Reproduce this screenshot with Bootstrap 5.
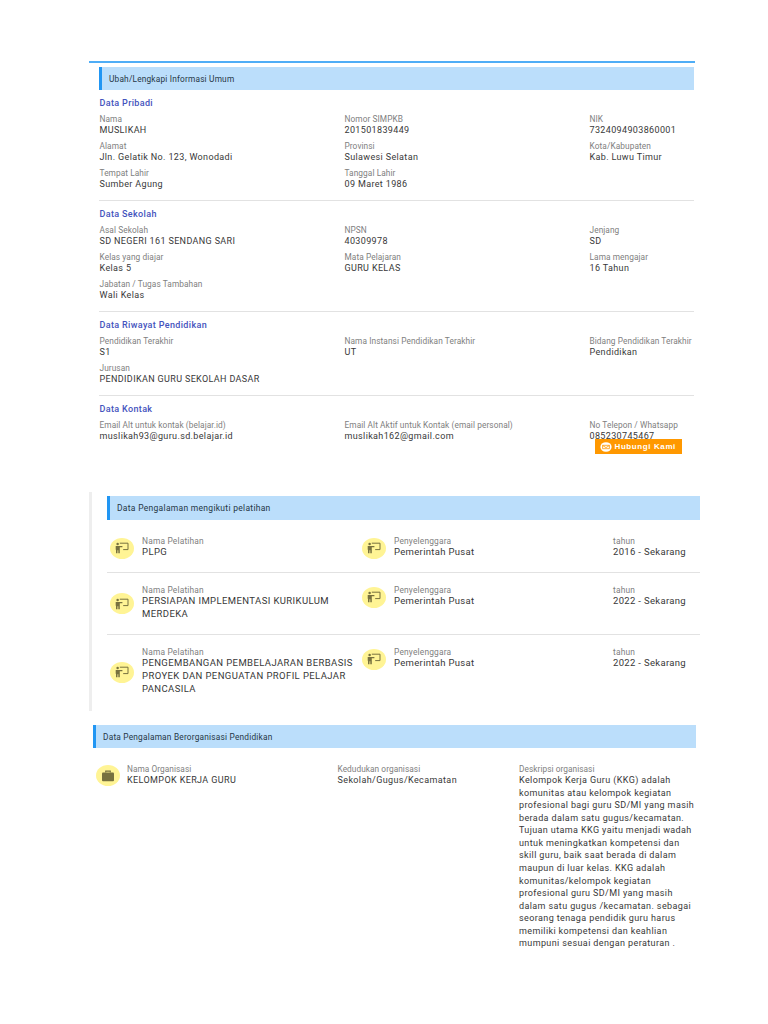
<!DOCTYPE html>
<html lang="id">
<head>
<meta charset="utf-8">
<meta name="viewport" content="width=device-width, initial-scale=1">
<title>Biodata Guru</title>
<link href="https://cdn.jsdelivr.net/npm/bootstrap@5.3.0/dist/css/bootstrap.min.css" rel="stylesheet">
<style>
  body { font-family: Roboto, "Liberation Sans", sans-serif; background: #fff; color: #333; white-space: nowrap; overflow-x: hidden; }
  .page { height: 1024px; padding-top: 61px; }
  .profile { width: 606px; margin-left: 89px; height: 431px; border-top: 2px solid #4fadf6; padding: 4px 1px 0 10px; }
  .bar { background: #bbdefb; border-left: 3px solid #2196f3; color: #263746; font-size: 8.3px; letter-spacing: .19px; }
  .profile .bar { height: 23px; padding: 1px 0 0 7px; }
  .group { padding: 7px 0 5px .5px; border-bottom: 1px solid #e2e2e2; }
  .group:last-child { border-bottom: 0; }
  .group h2 { font-size: 9px; font-weight: 500; line-height: 12px; letter-spacing: .35px; color: #4453bd; margin: 0 0 5px; }
  .fields { display: grid; grid-template-columns: 245px 245px 105px; grid-auto-rows: 27px; }
  .lbl { font-size: 8.3px; line-height: 11px; letter-spacing: .08px; color: #808080; }
  .val { font-size: 9px; line-height: 12px; letter-spacing: .36px; color: #383838; }
  .profile .val { margin-top: -1px; }
  .contact-btn { left: 5px; top: 19px; width: 87px; height: 15px; background: #ff9800; color: #fff; border-radius: 0; font: bold 8px/15px "Liberation Sans", sans-serif; letter-spacing: .6px; padding: 0 0 0 5px; gap: 3px; border: 0; z-index: 1; }
  .training { width: 611px; margin-left: 89px; height: 219px; border-left: 3px solid #eee; padding: 4px 0 0 15px; }
  .training .bar { height: 24px; padding-left: 7px; font-size: 8.5px; letter-spacing: .29px; }
  .course { display: grid; grid-template-columns: 252px 254px 87px; padding: 12px 0 14px; border-bottom: 1px solid #e2e2e2; }
  .course:last-child { border: 0; }
  .training .lbl { font-size: 8.4px; line-height: 10px; letter-spacing: .18px; }
  .training .val { font-size: 9.5px; line-height: 13px; letter-spacing: .4px; margin-top: -1px; }
  .training .val.mixed { letter-spacing: .32px; }
  .item { display: grid; grid-template-columns: 24px 1fr; grid-template-rows: 10px auto; column-gap: 8px; padding-left: 3px; align-content: start; }
  .item .disc { grid-row: 1 / 3; align-self: center; margin: 1px 0 -1px; }
  .item .lbl, .item .val { grid-column: 2; }
  .disc { width: 24px; height: 21px; border-radius: 50%; background: #fff495; color: #77713f; flex: none; }
  .org { width: 603px; margin: 14px 0 0 93px; }
  .org .bar { height: 23px; padding: 1px 0 0 7px; letter-spacing: .21px; }
  .org-row { display: grid; grid-template-columns: 34px 210.5px 181.5px 177px; padding-top: 16px; }
  .org .lbl { line-height: 10px; letter-spacing: .05px; }
  .org .val { line-height: 12.57px; letter-spacing: .39px; }
  .org .disc { margin: 1px 0 0 3px; }
</style>
</head>
<body>
<svg class="d-none">
  <symbol id="teach" viewBox="0 0 14 12">
    <path d="M4.8 1.2H13V7.6H8.2" fill="none" stroke="currentColor" stroke-width="1"/>
    <circle cx="2.6" cy="2" r="1.25" fill="currentColor"/>
    <path d="M.7 4H7.4V5.3H4.8V11.3H3.3V8.2H2.5V11.3H1V7.7H.7Z" fill="currentColor"/>
  </symbol>
  <symbol id="case" viewBox="0 0 14 12">
    <path d="M4.7 2.6V1.1H9.3V2.6" fill="none" stroke="currentColor" stroke-width="1.1"/>
    <rect x="1" y="2.5" width="12" height="8.7" rx="1" fill="currentColor"/>
  </symbol>
</svg>
<main class="page">
  <section class="profile">
    <div class="bar d-flex align-items-center">Ubah/Lengkapi Informasi Umum</div>
    <div class="group">
      <h2>Data Pribadi</h2>
      <div class="fields">
        <div><div class="lbl">Nama</div><div class="val">MUSLIKAH</div></div>
        <div><div class="lbl">Nomor SIMPKB</div><div class="val">201501839449</div></div>
        <div><div class="lbl">NIK</div><div class="val">7324094903860001</div></div>
        <div><div class="lbl">Alamat</div><div class="val">Jln. Gelatik No. 123, Wonodadi</div></div>
        <div><div class="lbl">Provinsi</div><div class="val">Sulawesi Selatan</div></div>
        <div><div class="lbl">Kota/Kabupaten</div><div class="val">Kab. Luwu Timur</div></div>
        <div><div class="lbl">Tempat Lahir</div><div class="val">Sumber Agung</div></div>
        <div><div class="lbl">Tanggal Lahir</div><div class="val">09 Maret 1986</div></div>
      </div>
    </div>
    <div class="group">
      <h2>Data Sekolah</h2>
      <div class="fields">
        <div><div class="lbl">Asal Sekolah</div><div class="val">SD NEGERI 161 SENDANG SARI</div></div>
        <div><div class="lbl">NPSN</div><div class="val">40309978</div></div>
        <div><div class="lbl">Jenjang</div><div class="val">SD</div></div>
        <div><div class="lbl">Kelas yang diajar</div><div class="val">Kelas 5</div></div>
        <div><div class="lbl">Mata Pelajaran</div><div class="val">GURU KELAS</div></div>
        <div><div class="lbl">Lama mengajar</div><div class="val">16 Tahun</div></div>
        <div><div class="lbl">Jabatan / Tugas Tambahan</div><div class="val">Wali Kelas</div></div>
      </div>
    </div>
    <div class="group">
      <h2>Data Riwayat Pendidikan</h2>
      <div class="fields">
        <div><div class="lbl">Pendidikan Terakhir</div><div class="val">S1</div></div>
        <div><div class="lbl">Nama Instansi Pendidikan Terakhir</div><div class="val">UT</div></div>
        <div><div class="lbl">Bidang Pendidikan Terakhir</div><div class="val">Pendidikan</div></div>
        <div><div class="lbl">Jurusan</div><div class="val">PENDIDIKAN GURU SEKOLAH DASAR</div></div>
      </div>
    </div>
    <div class="group">
      <h2>Data Kontak</h2>
      <div class="fields">
        <div><div class="lbl">Email Alt untuk kontak (belajar.id)</div><div class="val">muslikah93@guru.sd.belajar.id</div></div>
        <div><div class="lbl">Email Alt Aktif untuk Kontak (email personal)</div><div class="val">muslikah162@gmail.com</div></div>
        <div class="position-relative"><div class="lbl">No Telepon / Whatsapp</div><div class="val">085230745467</div>
          <button type="button" class="btn contact-btn position-absolute d-flex align-items-center">
            <svg width="12" height="10" viewBox="0 0 12 10"><ellipse cx="6" cy="5" rx="5.6" ry="4.8" fill="#fff"/><path d="M2.6 3.3H9.4V6.7H2.6ZM2.6 3.5L6 5.6L9.4 3.5" fill="none" stroke="#ff9800" stroke-width=".8"/></svg>
            <span>Hubungi Kami</span>
          </button>
        </div>
      </div>
    </div>
  </section>

  <section class="training">
    <div class="bar d-flex align-items-center">Data Pengalaman mengikuti pelatihan</div>
    <div class="pt-1">
      <article class="course">
        <div class="item"><span class="disc d-flex align-items-center justify-content-center"><svg width="14" height="12"><use href="#teach"/></svg></span><div class="lbl">Nama Pelatihan</div><div class="val">PLPG</div></div>
        <div class="item"><span class="disc d-flex align-items-center justify-content-center"><svg width="14" height="12"><use href="#teach"/></svg></span><div class="lbl">Penyelenggara</div><div class="val mixed">Pemerintah Pusat</div></div>
        <div><div class="lbl">tahun</div><div class="val mixed">2016 - Sekarang</div></div>
      </article>
      <article class="course">
        <div class="item"><span class="disc d-flex align-items-center justify-content-center"><svg width="14" height="12"><use href="#teach"/></svg></span><div class="lbl">Nama Pelatihan</div><div class="val">PERSIAPAN IMPLEMENTASI KURIKULUM<br>MERDEKA</div></div>
        <div class="item"><span class="disc d-flex align-items-center justify-content-center"><svg width="14" height="12"><use href="#teach"/></svg></span><div class="lbl">Penyelenggara</div><div class="val mixed">Pemerintah Pusat</div></div>
        <div><div class="lbl">tahun</div><div class="val mixed">2022 - Sekarang</div></div>
      </article>
      <article class="course">
        <div class="item"><span class="disc d-flex align-items-center justify-content-center"><svg width="14" height="12"><use href="#teach"/></svg></span><div class="lbl">Nama Pelatihan</div><div class="val">PENGEMBANGAN PEMBELAJARAN BERBASIS<br>PROYEK DAN PENGUATAN PROFIL PELAJAR<br>PANCASILA</div></div>
        <div class="item"><span class="disc d-flex align-items-center justify-content-center"><svg width="14" height="12"><use href="#teach"/></svg></span><div class="lbl">Penyelenggara</div><div class="val mixed">Pemerintah Pusat</div></div>
        <div><div class="lbl">tahun</div><div class="val mixed">2022 - Sekarang</div></div>
      </article>
    </div>
  </section>

  <section class="org">
    <div class="bar d-flex align-items-center">Data Pengalaman Berorganisasi Pendidikan</div>
    <div class="org-row">
      <span class="disc d-flex align-items-center justify-content-center"><svg width="14" height="12"><use href="#case"/></svg></span>
      <div><div class="lbl">Nama Organisasi</div><div class="val">KELOMPOK KERJA GURU</div></div>
      <div><div class="lbl">Kedudukan organisasi</div><div class="val">Sekolah/Gugus/Kecamatan</div></div>
      <div><div class="lbl">Deskripsi organisasi</div><div class="val">Kelompok Kerja Guru (KKG) adalah<br>komunitas atau kelompok kegiatan<br>profesional bagi guru SD/MI yang masih<br>berada dalam satu gugus/kecamatan.<br>Tujuan utama KKG yaitu menjadi wadah<br>untuk meningkatkan kompetensi dan<br>skill guru, baik saat berada di dalam<br>maupun di luar kelas. KKG adalah<br>komunitas/kelompok kegiatan<br>profesional guru SD/MI yang masih<br>dalam satu gugus /kecamatan. sebagai<br>seorang tenaga pendidik guru harus<br>memiliki kompetensi dan keahlian<br>mumpuni sesuai dengan peraturan .</div></div>
    </div>
  </section>
</main>
<script src="https://cdn.jsdelivr.net/npm/bootstrap@5.3.0/dist/js/bootstrap.bundle.min.js"></script>
</body>
</html>
